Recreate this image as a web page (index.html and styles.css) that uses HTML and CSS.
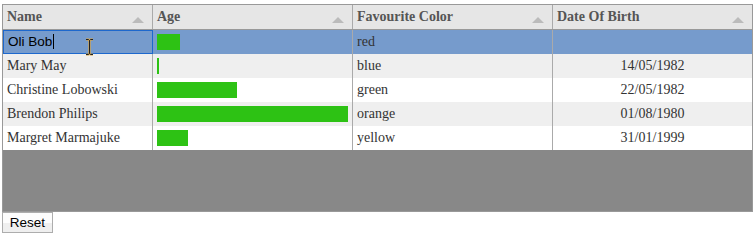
FILE: index.html
```html
<!DOCTYPE html>
<html lang="en">
<head>
    <meta charset="UTF-8">
    <title>Editable Table</title>
    <link rel="stylesheet" href="styles.css">
</head>
<body>
    <div class="tabulator">
        <div class="tab-header">
            <div class="col col-name">Name<span class="arrow"></span></div>
            <div class="col col-age">Age<span class="arrow"></span></div>
            <div class="col col-color">Favourite Color<span class="arrow"></span></div>
            <div class="col col-dob">Date Of Birth<span class="arrow"></span></div>
        </div>
        <div class="tab-body">
            <div class="row selected">
                <div class="cell col-name editing">
                    <span class="editor">Oli Bob<span class="caret"></span></span>
                    <svg class="mouse" width="9" height="18" viewBox="0 0 9 18">
                        <path d="M1 1.5h2.5l1 1 1-1H8M4.5 2.5v13M1 16.5h2.5l1-1 1 1H8" fill="none" stroke="#d9a441" stroke-width="2.2"/>
                        <path d="M1 1.5h2.5l1 1 1-1H8M4.5 2.5v13M1 16.5h2.5l1-1 1 1H8" fill="none" stroke="#222" stroke-width="1"/>
                    </svg>
                </div>
                <div class="cell col-age"><div class="bar" style="width: 12%"></div></div>
                <div class="cell col-color">red</div>
                <div class="cell col-dob"></div>
            </div>
            <div class="row even">
                <div class="cell col-name">Mary May</div>
                <div class="cell col-age"><div class="bar" style="width: 1%"></div></div>
                <div class="cell col-color">blue</div>
                <div class="cell col-dob">14/05/1982</div>
            </div>
            <div class="row">
                <div class="cell col-name">Christine Lobowski</div>
                <div class="cell col-age"><div class="bar" style="width: 42%"></div></div>
                <div class="cell col-color">green</div>
                <div class="cell col-dob">22/05/1982</div>
            </div>
            <div class="row even">
                <div class="cell col-name">Brendon Philips</div>
                <div class="cell col-age"><div class="bar" style="width: 100%"></div></div>
                <div class="cell col-color">orange</div>
                <div class="cell col-dob">01/08/1980</div>
            </div>
            <div class="row">
                <div class="cell col-name">Margret Marmajuke</div>
                <div class="cell col-age"><div class="bar" style="width: 16%"></div></div>
                <div class="cell col-color">yellow</div>
                <div class="cell col-dob">31/01/1999</div>
            </div>
        </div>
    </div>
    <button class="reset">Reset</button>
</body>
</html>
```

FILE: styles.css
```css
body {
    margin: 0;
    padding: 4px 2px 0;
    font-family: "Liberation Serif", serif;
    font-size: 14px;
    color: #333;
}
.tabulator {
    box-sizing: border-box;
    width: 751px;
    height: 208px;
    border: 1px solid #999;
    background: #888;
    overflow: hidden;
}
.tab-header {
    display: flex;
    background: #e6e6e6;
    border-bottom: 1px solid #999;
    color: #555;
    font-weight: bold;
}
.col {
    position: relative;
    box-sizing: border-box;
    padding: 4px;
    line-height: 16px;
    border-right: 1px solid #aaa;
}
.col-name { width: 150px; }
.col-age { width: 200px; }
.col-color { width: 200px; }
.col-dob { width: 199px; border-right: none; }
.arrow {
    position: absolute;
    right: 8px;
    top: 12px;
    width: 0;
    height: 0;
    border-left: 6px solid transparent;
    border-right: 6px solid transparent;
    border-bottom: 6px solid #bbb;
}
.row {
    display: flex;
    background: #fff;
}
.row.even {
    background: #efefef;
}
.row.selected {
    background: #769bcc;
}
.cell {
    position: relative;
    box-sizing: border-box;
    height: 24px;
    padding: 4px;
    line-height: 16px;
    border-right: 1px solid #aaa;
    white-space: nowrap;
}
.cell.col-dob {
    border-right: none;
    text-align: center;
}
.cell.editing {
    border: 1px solid #1d68cd;
    padding: 3px 4px;
}
.editor {
    font-family: "Liberation Sans", Arial, sans-serif;
    font-size: 13.5px;
    color: #000;
}
.caret {
    display: inline-block;
    width: 1px;
    height: 15px;
    margin-left: 1px;
    vertical-align: -3px;
    background: #000;
}
.mouse {
    position: absolute;
    left: 81px;
    top: 7px;
}
.bar {
    height: 16px;
    background: #2dc214;
}
.reset {
    display: block;
    box-sizing: border-box;
    width: 51px;
    height: 21px;
    margin: 0;
    padding: 0 6px;
    border: 1px solid #adadad;
    background: linear-gradient(#fdfdfd 55%, #efefef 55%);
    font-family: "Liberation Sans", Arial, sans-serif;
    font-size: 13.5px;
    color: #000;
}
```
